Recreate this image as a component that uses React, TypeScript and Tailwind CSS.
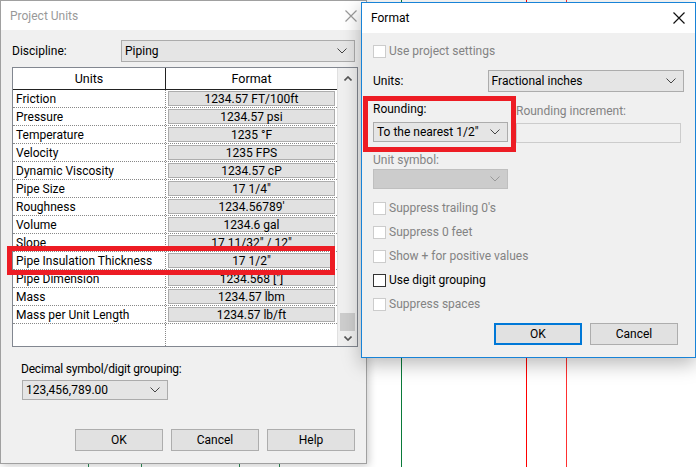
import React from "react";

const rows: [string, string][] = [
  ["Friction", "1234.57 FT/100ft"],
  ["Pressure", "1234.57 psi"],
  ["Temperature", "1235 °F"],
  ["Velocity", "1235 FPS"],
  ["Dynamic Viscosity", "1234.57 cP"],
  ["Pipe Size", "17 1/4\""],
  ["Roughness", "1234.56789'"],
  ["Volume", "1234.6 gal"],
  ["Slope", "17 11/32\" / 12\""],
  ["Pipe Insulation Thickness", "17 1/2\""],
  ["Pipe Dimension", "1234.568 [\"]"],
  ["Mass", "1234.57 lbm"],
  ["Mass per Unit Length", "1234.57 lb/ft"],
];

function Chevron({ className = "" }: { className?: string }) {
  return (
    <svg width="10" height="6" viewBox="0 0 10 6" className={className}>
      <path d="M0.5 0.5 L5 5 L9.5 0.5" fill="none" stroke="currentColor" strokeWidth="1" />
    </svg>
  );
}

function ScrollArrow({ up = false }: { up?: boolean }) {
  return (
    <svg width="8" height="5" viewBox="0 0 8 5" className={up ? "rotate-180" : ""}>
      <path d="M0.5 0.5 L4 4 L7.5 0.5" fill="none" stroke="#555" strokeWidth="1.6" />
    </svg>
  );
}

function CloseX({ color }: { color: string }) {
  return (
    <svg width="12" height="12" viewBox="0 0 12 12">
      <path d="M0.5 0.5 L11.5 11.5 M11.5 0.5 L0.5 11.5" stroke={color} strokeWidth="1.2" />
    </svg>
  );
}

function Combo({ text, className = "" }: { text: string; className?: string }) {
  return (
    <div
      className={`flex items-center justify-between border border-[#acacac] bg-[#e5e5e5] pl-[3px] pr-[7px] text-black ${className}`}
    >
      <span>{text}</span>
      <Chevron className="text-[#444]" />
    </div>
  );
}

function Check({ label, enabled = false }: { label: string; enabled?: boolean }) {
  return (
    <div className="flex h-[14px] items-center gap-[3px]">
      <div
        className={`h-[13px] w-[13px] border bg-white ${enabled ? "border-[#333]" : "border-[#cccccc]"}`}
      />
      <span className={enabled ? "text-black" : "text-[#838383]"}>{label}</span>
    </div>
  );
}

function Button({ label, primary = false }: { label: string; primary?: boolean }) {
  return (
    <div
      className={`flex h-[22px] w-[88px] items-center justify-center bg-[#e1e1e1] text-black ${
        primary ? "border-2 border-[#0078d7]" : "border border-[#adadad]"
      }`}
    >
      {label}
    </div>
  );
}

function ProjectUnits() {
  return (
    <div className="absolute left-0 top-0 flex h-[464px] w-[367px] flex-col border border-[#a0a0a0] bg-[#f0f0f0] shadow-[2px_2px_8px_rgba(0,0,0,0.2)]">
      <div className="flex h-[29px] shrink-0 items-center justify-between bg-white pl-[9px] pr-[9px] text-[#999]">
        <span>Project Units</span>
        <CloseX color="#9a9a9a" />
      </div>
      <div className="flex flex-col px-[11px]">
        <div className="mt-[10px] flex h-[22px] items-center">
          <span className="w-[110px]">Discipline:</span>
          <Combo text="Piping" className="h-[22px] w-[236px]" />
        </div>
        <div className="mt-[5px] flex h-[280px] w-[346px] border border-[#828790] bg-white">
          <div className="flex w-[324px] flex-col">
            <div className="flex h-[22px] border-b border-[#222] text-[12.5px]">
              <div className="flex w-[153px] items-center justify-center border-r border-[#222]">Units</div>
              <div className="flex flex-1 items-center justify-center">Format</div>
            </div>
            {rows.map(([u, f]) => (
              <div key={u} className="flex h-[18px] border-b border-dotted border-[#888] text-[12px]">
                <div className="flex w-[153px] items-center whitespace-nowrap border-r border-dotted border-[#888] pl-[3px]">
                  {u}
                </div>
                <div className="flex flex-1 items-stretch py-[1px] pl-[2px] pr-[2px]">
                  <div className="flex flex-1 items-center justify-center border border-[#adadad] bg-[#e1e1e1] leading-none">
                    {f}
                  </div>
                </div>
              </div>
            ))}
            <div className="flex flex-1">
              <div className="w-[153px] border-r border-dotted border-[#888]" />
            </div>
          </div>
          <div className="flex w-[20px] flex-col items-center border-l border-[#e0e0e0] bg-[#f0f0f0]">
            <div className="flex h-[20px] items-center justify-center">
              <ScrollArrow up />
            </div>
            <div className="flex-1" />
            <div className="h-[18px] w-[15px] bg-[#cdcdcd]" />
            <div className="flex h-[15px] items-center justify-center">
              <ScrollArrow />
            </div>
          </div>
        </div>
        <div className="ml-[9px] mt-[14px] tracking-[-0.2px]">Decimal symbol/digit grouping:</div>
        <Combo text="123,456,789.00" className="ml-[10px] mt-[3px] h-[20px] w-[146px]" />
        <div className="mt-[29px] flex justify-end gap-[8px]">
          <Button label="OK" />
          <Button label="Cancel" />
          <Button label="Help" />
        </div>
      </div>
    </div>
  );
}

function Format() {
  return (
    <div className="absolute left-[361px] top-[2px] flex h-[356px] w-[335px] flex-col border border-[#1883d7] bg-[#f0f0f0] shadow-[0_6px_18px_rgba(0,0,0,0.28)]">
      <div className="flex h-[30px] shrink-0 items-center justify-between bg-white pl-[9px] pr-[10px] text-black">
        <span>Format</span>
        <CloseX color="#111" />
      </div>
      <div className="flex flex-col px-[11px]">
        <div className="mt-[11px]">
          <Check label="Use project settings" />
        </div>
        <div className="mt-[12px] flex h-[22px] items-center">
          <span className="w-[115px]">Units:</span>
          <Combo text="Fractional inches" className="h-[22px] w-[197px]" />
        </div>
        <div className="mt-[9px] flex">
          <div className="flex w-[143px] flex-col">
            <span className="h-[16px]">Rounding:</span>
            <Combo text="To the nearest 1/2&quot;" className="mt-[5px] h-[20px] w-[135px]" />
          </div>
          <div className="flex flex-1 flex-col">
            <span className="mt-[2px] h-[16px] text-[#838383]">Rounding increment:</span>
            <div className="mt-[4px] h-[20px] w-[165px] border border-[#cccccc] bg-[#f0f0f0]" />
          </div>
        </div>
        <span className="mt-[9px] h-[16px] text-[#838383]">Unit symbol:</span>
        <div className="mt-[1px] flex h-[20px] w-[135px] items-center justify-end border border-[#bfbfbf] bg-[#cccccc] pr-[7px]">
          <Chevron className="text-[#999]" />
        </div>
        <div className="mt-[12px] flex flex-col gap-[10px]">
          <Check label="Suppress trailing 0's" />
          <Check label="Suppress 0 feet" />
          <Check label="Show + for positive values" />
          <Check label="Use digit grouping" enabled />
          <Check label="Suppress spaces" />
        </div>
        <div className="mt-[12px] flex justify-end gap-[8px] pr-[6px]">
          <Button label="OK" primary />
          <Button label="Cancel" />
        </div>
      </div>
    </div>
  );
}

export default function App() {
  return (
    <div className="relative h-[467px] w-[696px] overflow-hidden bg-white font-['Roboto',sans-serif] text-[12px] leading-[16px] text-black">
      <div className="absolute left-[401px] top-0 h-full w-px bg-[#0a7a3a]" />
      <div className="absolute left-[526px] top-0 h-full w-px bg-[#ff0000]" />
      <div className="absolute left-[566px] top-0 h-full w-px bg-[#ff3030]" />
      <div className="absolute left-[88px] top-[463px] h-[4px] w-px bg-[#2e8b57]" />
      <div className="absolute left-[141px] top-[463px] h-[4px] w-px bg-[#2e8b57]" />
      <div className="absolute left-[239px] top-[463px] h-[4px] w-px bg-[#2e8b57]" />
      <div className="absolute left-[279px] top-[463px] h-[4px] w-px bg-[#2e8b57]" />
      <ProjectUnits />
      <Format />
      {/* highlight annotations */}
      <div className="absolute left-[7px] top-[246px] h-[29px] w-[328px] border-[5px] border-[#ed1c24]" />
      <div className="absolute left-[363px] top-[96px] h-[56px] w-[153px] border-[5px] border-[#ed1c24]" />
    </div>
  );
}
